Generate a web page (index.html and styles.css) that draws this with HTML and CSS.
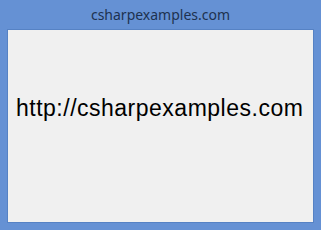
FILE: index.html
```html
<!DOCTYPE html>
<html>
<head>
<meta charset="utf-8">
<link rel="stylesheet" href="styles.css">
</head>
<body>
<div class="window">
  <div class="titlebar">csharpexamples.com</div>
  <div class="client">
    <div class="label">http://csharpexamples.com</div>
  </div>
</div>
</body>
</html>
```
FILE: styles.css
```css
html, body {
  margin: 0;
  padding: 0;
}
.window {
  width: 321px;
  height: 230px;
  background: #6591d4;
  display: flex;
  flex-direction: column;
  box-sizing: border-box;
  padding: 0 8px 8px 8px;
}
.titlebar {
  height: 30px;
  line-height: 30px;
  text-align: center;
  font-family: "Noto Sans", sans-serif;
  font-size: 14px;
  color: #1d3150;
  padding-bottom: 1px;
  box-sizing: border-box;
}
.client {
  flex: 1;
  background: #f0f0f0;
  box-shadow: 0 0 0 1px #5682c4;
  padding: 65px 0 0 8px;
}
.label {
  font-family: "Liberation Sans", Arial, sans-serif;
  font-size: 23px;
  line-height: 26px;
  letter-spacing: 0.5px;
  color: #000;
}
```
